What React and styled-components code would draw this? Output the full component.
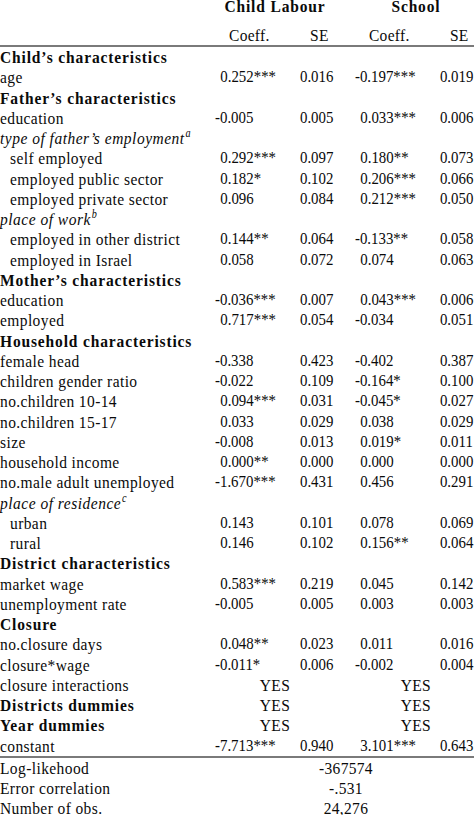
import React from 'react';
import styled, { createGlobalStyle } from 'styled-components';

const S = 0.886;
const px = v => `${(v / S).toFixed(2)}px`;

const Global = createGlobalStyle`
  html, body { margin: 0; padding: 0; background: #fff; overflow: hidden; }
  body { font-family: "Liberation Serif", "Times New Roman", serif; color: #0a0a0a; }
`;

const Table = styled.div`
  width: ${px(477)};
  display: grid;
  grid-template-columns: ${px(215)} ${px(79.7)} ${px(60.3)} ${px(79.7)} ${px(42.3)};
  font-size: 17.5px;
  transform: scaleX(${S});
  transform-origin: 0 0;
`;

const TopCell = styled.div`
  line-height: 13px;
  padding-bottom: 12px;
  grid-column: ${p => p.$col};
  padding-right: ${p => px(p.$shift || 0)};
  text-align: center;
  font-weight: 700;
  letter-spacing: ${px(0.85)};
  white-space: nowrap;
`;

const SubHead = styled.div`
  grid-column: ${p => p.$col || 'auto'};
  line-height: 20px;
  height: 20px;
  padding-left: ${p => px(p.$pad)};
  letter-spacing: ${px(0.3)};
  white-space: nowrap;
`;

const Rule = styled.div`
  grid-column: 1 / -1;
  height: 2px;
  background: #7a7a7a;
`;

const Row = styled.div`
  display: contents;
`;

const Label = styled.div`
  grid-column: ${p => (p.$full ? '1 / -1' : 'auto')};
  height: 20.25px;
  line-height: 20.25px;
  padding-left: ${p => (p.$indent ? px(10) : 0)};
  font-weight: ${p => (p.$bold ? 700 : 400)};
  font-style: ${p => (p.$italic ? 'italic' : 'normal')};
  letter-spacing: ${p => px(p.$bold ? 0.85 : p.$italic ? 0.5 : 0.4)};
  white-space: nowrap;
`;

const Sup = styled.sup`
  font-size: 11.5px;
  line-height: 0;
  vertical-align: 7px;
  margin-left: 1px;
`;

const Num = styled.div`
  height: 20.25px;
  line-height: 20.25px;
  font-size: 16.8px;
  padding-left: ${p => (p.$neg ? 0 : px(5.3))};
  white-space: nowrap;
`;

const Multi = styled.div`
  grid-column: span ${p => p.$span};
  height: 20.25px;
  line-height: 20.25px;
  text-align: center;
  padding-right: ${p => px(p.$shift || 0)};
  letter-spacing: ${px(0.3)};
  white-space: nowrap;
`;

const rows = [
  { t: 'sec', l: 'Child’s characteristics' },
  { l: 'age', v: ['0.252***', '0.016', '-0.197***', '0.019'] },
  { t: 'sec', l: 'Father’s characteristics' },
  { l: 'education', v: ['-0.005', '0.005', '0.033***', '0.006'] },
  { t: 'it', l: 'type of father’s employment', s: 'a' },
  { l: 'self employed', i: true, v: ['0.292***', '0.097', '0.180**', '0.073'] },
  { l: 'employed public sector', i: true, v: ['0.182*', '0.102', '0.206***', '0.066'] },
  { l: 'employed private sector', i: true, v: ['0.096', '0.084', '0.212***', '0.050'] },
  { t: 'it', l: 'place of work', s: 'b' },
  { l: 'employed in other district', i: true, v: ['0.144**', '0.064', '-0.133**', '0.058'] },
  { l: 'employed in Israel', i: true, v: ['0.058', '0.072', '0.074', '0.063'] },
  { t: 'sec', l: 'Mother’s characteristics' },
  { l: 'education', v: ['-0.036***', '0.007', '0.043***', '0.006'] },
  { l: 'employed', v: ['0.717***', '0.054', '-0.034', '0.051'] },
  { t: 'sec', l: 'Household characteristics' },
  { l: 'female head', v: ['-0.338', '0.423', '-0.402', '0.387'] },
  { l: 'children gender ratio', v: ['-0.022', '0.109', '-0.164*', '0.100'] },
  { l: 'no.children 10-14', v: ['0.094***', '0.031', '-0.045*', '0.027'] },
  { l: 'no.children 15-17', v: ['0.033', '0.029', '0.038', '0.029'] },
  { l: 'size', v: ['-0.008', '0.013', '0.019*', '0.011'] },
  { l: 'household income', v: ['0.000**', '0.000', '0.000', '0.000'] },
  { l: 'no.male adult unemployed', v: ['-1.670***', '0.431', '0.456', '0.291'] },
  { t: 'it', l: 'place of residence', s: 'c' },
  { l: 'urban', i: true, v: ['0.143', '0.101', '0.078', '0.069'] },
  { l: 'rural', i: true, v: ['0.146', '0.102', '0.156**', '0.064'] },
  { t: 'sec', l: 'District characteristics' },
  { l: 'market wage', v: ['0.583***', '0.219', '0.045', '0.142'] },
  { l: 'unemployment rate', v: ['-0.005', '0.005', '0.003', '0.003'] },
  { t: 'sec', l: 'Closure' },
  { l: 'no.closure days', v: ['0.048**', '0.023', '0.011', '0.016'] },
  { l: 'closure*wage', v: ['-0.011*', '0.006', '-0.002', '0.004'] },
  { l: 'closure interactions', yes: true },
  { l: 'Districts dummies', b: true, yes: true },
  { l: 'Year dummies', b: true, yes: true },
  { l: 'constant', v: ['-7.713***', '0.940', '3.101***', '0.643'] },
];

const footer = [
  { l: 'Log-likehood', v: '-367574' },
  { l: 'Error correlation', v: '-.531' },
  { l: 'Number of obs.', v: '24,276' },
];

function BodyRow({ r }) {
  if (r.t === 'sec') {
    return <Label $full $bold>{r.l}</Label>;
  }
  if (r.t === 'it') {
    return (
      <Label $full $italic>
        {r.l}
        <Sup>{r.s}</Sup>
      </Label>
    );
  }
  return (
    <Row>
      <Label $indent={r.i} $bold={r.b}>{r.l}</Label>
      {r.yes ? (
        <>
          <Multi $span={2} $shift={20}>YES</Multi>
          <Multi $span={2}>YES</Multi>
        </>
      ) : (
        r.v.map((x, k) => (
          <Num key={k} $neg={x.startsWith('-')}>{x}</Num>
        ))
      )}
    </Row>
  );
}

export default function App() {
  return (
    <>
      <Global />
      <Table>
        <TopCell $col="2 / span 2" $shift={20}>Child Labour</TopCell>
        <TopCell $col="4 / span 2">School</TopCell>
        <SubHead $col={2} $pad={14}>Coeff.</SubHead>
        <SubHead $pad={15.3}>SE</SubHead>
        <SubHead $pad={14}>Coeff.</SubHead>
        <SubHead $pad={15.3}>SE</SubHead>
        <Rule />
        {rows.map((r, k) => (
          <BodyRow key={k} r={r} />
        ))}
        <Rule />
        {footer.map((f, k) => (
          <Row key={k}>
            <Label>{f.l}</Label>
            <Multi $span={4}>{f.v}</Multi>
          </Row>
        ))}
      </Table>
    </>
  );
}
